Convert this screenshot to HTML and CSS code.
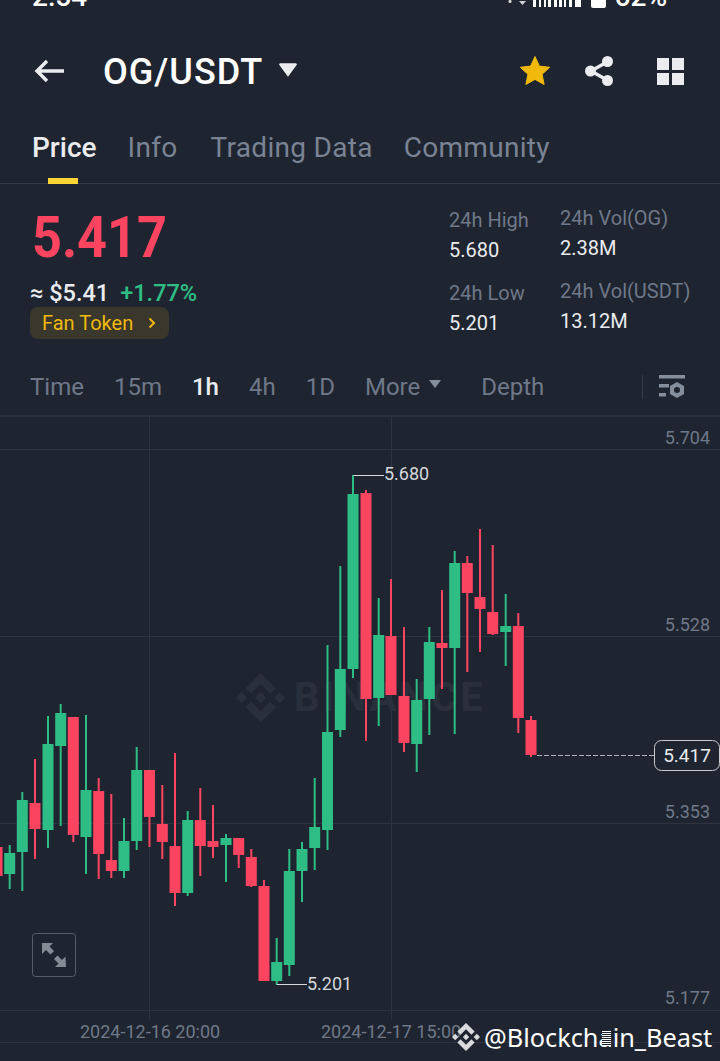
FILE: index.html
```html
<!DOCTYPE html>
<html lang="en">
<head>
  <meta charset="UTF-8" />
  <meta name="viewport" content="width=device-width, initial-scale=1.0" />
  <title>OG/USDT</title>
  <link rel="stylesheet" href="styles.css">
</head>
<body>
  <div class="status-bar">
    <span class="status-time">2:54</span>
    <div class="status-right">
      <svg class="status-icons" width="78" height="8" viewBox="0 0 78 8">
        <circle cx="6" cy="1.500" r="1.600" fill="#cfd2d6"/>
        <path d="M15 1h7l-3.500 4z" fill="#cfd2d6"/>
        <path d="M29 0h3v7h-3zM35 0h2v7h-2zM40 0h2v7h-2zM44 0h3v7h-3zM50 0h3v7h-3zM55 0h3v7h-3zM60 0h2v7h-2zM65 0h3v7h-3zM71 0h6v7h-6z" fill="#fff"/>
      </svg>
      <span class="status-battery"></span>
      <span class="status-pct">62%</span>
    </div>
  </div>

  <header class="top-bar">
    <svg class="back" width="32" height="24" viewBox="0 0 32 24">
      <path d="M30 12H4M13 2L3 12l10 10" fill="none" stroke="#eaecef" stroke-width="3.400"/>
    </svg>
    <h1 class="pair">OG/USDT</h1>
    <svg class="pair-caret" width="20" height="16" viewBox="0 0 18 14"><path d="M2 1h14a1 1 0 0 1 .8 1.600L9 13 1.200 2.600A1 1 0 0 1 2 1z" fill="#eaecef"/></svg>
    <div class="top-actions">
      <svg class="star" width="32" height="32" viewBox="0 0 32 32"><path d="M16 1.500l4.400 9.600 10.300 1.200-7.600 7 2 10.200-9.100-5.100-9.100 5.100 2-10.200-7.600-7 10.300-1.200z" fill="#f0b90b" stroke="#f0b90b" stroke-linejoin="round"/></svg>
      <svg class="share" width="32" height="32" viewBox="0 0 32 32">
        <path d="M24 7L8 16l16 9" fill="none" stroke="#eaecef" stroke-width="3.400"/>
        <circle cx="24.500" cy="6.500" r="5.500" fill="#eaecef"/>
        <circle cx="7.500" cy="16" r="5.500" fill="#eaecef"/>
        <circle cx="24.500" cy="25.500" r="5.500" fill="#eaecef"/>
      </svg>
      <div class="grid-icon"><i></i><i></i><i></i><i></i></div>
    </div>
  </header>

  <nav class="tabs">
    <a class="tab active">Price</a>
    <a class="tab tab-info">Info</a>
    <a class="tab">Trading Data</a>
    <a class="tab">Community</a>
  </nav>

  <section class="summary">
    <div class="summary-left">
      <div class="last-price">5.417</div>
      <div class="sub-price"><span class="usd">≈ $5.41</span><span class="change">+1.77%</span></div>
      <div class="badge">Fan Token
        <svg width="10" height="12" viewBox="0 0 10 12"><path d="M2.500 1.500L7 6l-4.500 4.500" fill="none" stroke="#f0b90b" stroke-width="2"/></svg>
      </div>
    </div>
    <div class="stats">
      <div class="stat-col first">
        <div class="stat"><span class="stat-label">24h High</span><span class="stat-value">5.680</span></div>
        <div class="stat"><span class="stat-label">24h Low</span><span class="stat-value">5.201</span></div>
      </div>
      <div class="stat-col">
        <div class="stat"><span class="stat-label">24h Vol(OG)</span><span class="stat-value">2.38M</span></div>
        <div class="stat"><span class="stat-label">24h Vol(USDT)</span><span class="stat-value">13.12M</span></div>
      </div>
    </div>
  </section>

  <div class="intervals">
    <span class="iv iv-time">Time</span>
    <span class="iv iv-15m">15m</span>
    <span class="iv iv-1h active">1h</span>
    <span class="iv iv-4h">4h</span>
    <span class="iv iv-1d">1D</span>
    <span class="iv iv-more">More
      <svg width="14" height="10" viewBox="0 0 14 10"><path d="M1 1h12L7 9z" fill="#848e9c"/></svg>
    </span>
    <span class="iv iv-depth">Depth</span>
    <span class="iv-sep"></span>
    <svg class="iv-settings" width="26" height="24" viewBox="0 0 26 24">
      <path d="M0 0h26v3.500H0zM0 9h10v3.500H0zM0 18h7v3.500H0z" fill="#848e9c"/>
      <path d="M18 7l7 4v8l-7 4-7-4v-8z" fill="#848e9c"/>
      <circle cx="18" cy="15" r="3" fill="#1f2530"/>
    </svg>
  </div>

  <div class="chart">
    <svg id="chartSvg" width="720" height="644" viewBox="0 417 720 644">
      <g class="grid">
        <path d="M0 449.500H720M0 636.500H720M0 823.500H720M0 1010.500H720M0 1042.500H720M149.500 417V1020M391.500 417V1020"/>
      </g>
      <g class="logo-mark" transform="translate(236 673) scale(0.39)">
        <path d="M38.730 53.200l24.590-24.580 24.600 24.600 14.300-14.310L63.320 0 24.430 38.900l14.300 14.300zM0 63.310l14.300-14.310 14.310 14.310-14.310 14.300zM38.730 73.410l24.590 24.590 24.600-24.600 14.310 14.290-38.900 38.910-38.910-38.880-.02-.02zM98 63.310l14.300-14.310 14.310 14.300-14.310 14.320zM77.830 63.300L63.320 48.780 52.590 59.510l-1.240 1.230-2.540 2.540 14.510 14.500 14.510-14.470z"/>
      </g>
      <text class="logo-text" x="294" y="711">BINANCE</text>
      <g id="candles"></g>
      <text class="axis" x="710" y="444" text-anchor="end">5.704</text>
      <text class="axis" x="710" y="631" text-anchor="end">5.528</text>
      <text class="axis" x="710" y="817.500" text-anchor="end">5.353</text>
      <text class="axis" x="710" y="1004" text-anchor="end">5.177</text>
      <text class="axis" x="80" y="1038">2024-12-16 20:00</text>
      <text class="axis" x="321" y="1038">2024-12-17 15:00</text>
      <path class="marker" d="M353.500 475.500H384M277 984.500H307"/>
      <text class="mark-label" x="384" y="480">5.680</text>
      <text class="mark-label" x="307" y="990">5.201</text>
      <path class="last-line" d="M537 755.500H654"/>
      <rect class="last-box" x="654.500" y="740.500" width="65" height="30" rx="7"/>
      <text class="last-label" x="687" y="762" text-anchor="middle">5.417</text>
      <rect class="expand" x="32.500" y="933.500" width="43" height="43" rx="3"/>
      <path class="expand-arrows" d="M42 943h11l-3.500 3.500 4.500 4.500 -3.500 3.500-4.500-4.500L42 954zM66 967H55l3.500-3.500-4.500-4.500 3.500-3.500 4.500 4.500 3.500-3.500z"/>
    </svg>
  </div>

  <div class="watermark">
    <svg width="28" height="28" viewBox="0 0 126.610 126.610">
      <path d="M38.730 53.200l24.590-24.580 24.600 24.600 14.300-14.310L63.320 0 24.430 38.900l14.300 14.300zM0 63.310l14.300-14.310 14.310 14.310-14.310 14.300zM38.730 73.410l24.590 24.590 24.600-24.600 14.310 14.290-38.900 38.910-38.910-38.880-.02-.02zM98 63.310l14.300-14.310 14.310 14.300-14.310 14.320zM77.830 63.300L63.320 48.780 52.590 59.510l-1.240 1.230-2.540 2.540 14.510 14.500 14.510-14.470z" fill="#d9dbde"/>
    </svg>
    <span class="wm-text">@Blockchain_Beast<i class="wm-glitch"></i></span>
  </div>

  <script>
    // x, wick top, wick bottom, body top, body bottom, up/down
    const candles = [
      [-3, 847, 876, 847, 876, 'd'],
      [9.7, 845, 889, 853, 874, 'u'],
      [22.3, 792, 891, 800, 852, 'u'],
      [35, 759, 859, 803, 829, 'd'],
      [48, 716, 848, 744, 830, 'u'],
      [60.7, 704, 826, 713, 746, 'u'],
      [73.3, 717, 842, 717, 835, 'd'],
      [86, 715, 874, 790, 837, 'u'],
      [98.7, 778, 879, 791, 854, 'd'],
      [111.3, 794, 878, 860, 871, 'd'],
      [124, 818, 878, 841, 871, 'u'],
      [136.7, 747, 850, 770, 841, 'u'],
      [149.5, 770, 847, 770, 817, 'd'],
      [162.3, 785, 859, 824, 842, 'd'],
      [175, 753, 906, 846, 893, 'd'],
      [187.7, 811, 896, 820, 893, 'u'],
      [200.3, 788, 876, 820, 846, 'd'],
      [213, 805, 858, 841, 847, 'd'],
      [226, 834, 882, 838, 845, 'u'],
      [238.7, 838, 868, 838, 855, 'd'],
      [251.3, 849, 887, 857, 886, 'd'],
      [264, 880, 981, 886, 981, 'd'],
      [276.7, 938, 985, 962, 981, 'u'],
      [289.3, 849, 976, 871, 965, 'u'],
      [302, 842, 902, 849, 871, 'u'],
      [314.7, 778, 870, 827, 848, 'u'],
      [327.5, 645, 850, 732, 830, 'u'],
      [340.3, 566, 737, 669, 730, 'u'],
      [353, 475, 678, 494, 669, 'u'],
      [366, 490, 741, 493, 699, 'd'],
      [378.7, 598, 726, 635, 698, 'u'],
      [391, 579, 695, 636, 695, 'd'],
      [404, 627, 752, 696, 743, 'd'],
      [416.7, 679, 772, 700, 744, 'u'],
      [429.3, 627, 735, 642, 699, 'u'],
      [442, 590, 689, 643, 648, 'd'],
      [454.7, 551, 734, 563, 648, 'u'],
      [467.3, 556, 672, 563, 593, 'd'],
      [480, 529, 652, 597, 609, 'd'],
      [492.7, 545, 635, 612, 634, 'd'],
      [505.7, 594, 666, 626, 632, 'u'],
      [518.3, 613, 733, 626, 718, 'd'],
      [531, 716, 757, 720, 755, 'd']
    ];

    const group = document.getElementById('candles');
    const NS = 'http://www.w3.org/2000/svg';

    function addRect(x, y, w, h, cls) {
      const r = document.createElementNS(NS, 'rect');
      r.setAttribute('x', x);
      r.setAttribute('y', y);
      r.setAttribute('width', w);
      r.setAttribute('height', h);
      r.setAttribute('class', cls);
      group.appendChild(r);
    }

    candles.forEach(([x, wt, wb, bt, bb, dir]) => {
      const cls = dir === 'u' ? 'up' : 'down';
      addRect(x - 1, wt, 2, wb - wt, cls);
      addRect(x - 5.5, bt, 11, bb - bt, cls);
    });
  </script>
</body>
</html>
```

FILE: styles.css
```css
* {
  box-sizing: border-box;
}
html, body {
  margin: 0;
  height: 1061px;
  overflow: hidden;
}
body {
  position: relative;
  background-color: #1f2530;
  font-family: Roboto, "Noto Sans", sans-serif;
  color: #eaecef;
}

/* status bar, cut by the top of the screen */
.status-bar {
  height: 8px;
  overflow: hidden;
  display: flex;
  justify-content: space-between;
  align-items: flex-end;
  padding: 0 53px 0 32px;
  color: #fff;
  font-size: 28px;
  font-weight: 500;
  line-height: 22px;
}
.status-right {
  display: flex;
  align-items: flex-end;
  gap: 9px;
}
.status-icons {
  display: block;
}
.status-battery {
  width: 15px;
  height: 10px;
  background-color: #fff;
  border-radius: 2px;
}

/* header */
.top-bar {
  height: 126px;
  display: flex;
  align-items: center;
  padding: 0 36px 0 34px;
}
.back {
  margin-right: 37px;
}
.pair {
  margin: 1px 0 0;
  font-size: 36px;
  font-weight: 500;
  letter-spacing: 1px;
  color: #fff;
}
.pair-caret {
  margin: -3px 0 0 15px;
}
.top-actions {
  margin-left: auto;
  display: flex;
  align-items: center;
}
.star {
  margin-right: 32px;
}
.share {
  margin-right: 42px;
}
.grid-icon {
  width: 27px;
  height: 27px;
  display: grid;
  grid-template-columns: 1fr 1fr;
  gap: 3px;
}
.grid-icon i {
  background-color: #eaecef;
}

/* tabs */
.tabs {
  height: 50px;
  display: flex;
  gap: 31px;
  padding: 0 32px;
  border-bottom: 1px solid #353b46;
}
.tab {
  position: relative;
  font-size: 28px;
  line-height: 28px;
  letter-spacing: 0.3px;
  color: #7a8394;
}
.tab-info {
  width: 52px;
}
.tab.active {
  color: #eaecef;
  font-weight: 500;
  letter-spacing: 0;
}
.tab.active::after {
  content: "";
  position: absolute;
  left: 16px;
  bottom: -1px;
  width: 30px;
  height: 6px;
  background-color: #fcd535;
}

/* price summary */
.summary {
  height: 178px;
  display: flex;
  justify-content: space-between;
  padding: 21px 0 0 30px;
}
.last-price {
  margin: -3px 0 6px 2px;
  font-size: 58px;
  line-height: 70px;
  font-weight: 700;
  color: #fb4560;
  transform: scaleX(0.9);
  transform-origin: left center;
}
.sub-price {
  display: flex;
  gap: 11px;
  font-size: 23.500px;
  line-height: 30px;
  font-weight: 500;
}
.usd {
  color: #eaecef;
}
.change {
  color: #2ebd85;
}
.badge {
  display: inline-flex;
  align-items: center;
  gap: 14px;
  height: 32px;
  margin-top: -1px;
  padding: 0 12px;
  border-radius: 8px;
  background-color: #3a372c;
  color: #f0b90b;
  font-size: 20px;
}
.stats {
  display: flex;
  width: 271px;
}
.stat-col {
  display: flex;
  flex-direction: column;
  gap: 16px;
  width: 111px;
}
.stat-col:last-child {
  width: 160px;
}
.stat-col.first {
  padding-top: 2px;
}
.stat {
  display: flex;
  flex-direction: column;
  gap: 3px;
}
.stat-label {
  font-size: 20px;
  line-height: 26px;
  color: #6f7888;
}
.stat-value {
  font-size: 20px;
  line-height: 28px;
  color: #eaecef;
}

/* interval row */
.intervals {
  height: 55px;
  display: flex;
  align-items: center;
  padding: 0 0 4px 30px;
  border-bottom: 2px solid #2b313c;
  font-size: 24px;
  color: #6f7888;
}
.iv {
  margin-right: 30px;
}
.iv.active {
  color: #eaecef;
  font-weight: 500;
}
.iv-more {
  display: flex;
  align-items: center;
  gap: 8px;
  margin-right: 39px;
}
.iv-more svg {
  margin-top: -6px;
}
.iv-sep {
  width: 1px;
  height: 24px;
  margin-left: 68px;
  background-color: #353b46;
}
.iv-settings {
  margin-left: 16px;
}

/* chart */
.chart {
  height: 644px;
}
.chart svg {
  display: block;
}
.grid path {
  fill: none;
  stroke: #2e343f;
  stroke-width: 1;
}
.logo-mark {
  fill: #2a303b;
}
.logo-text {
  fill: #2a303b;
  font-size: 40px;
  font-weight: 700;
  letter-spacing: 3.200px;
}
.up {
  fill: #2ebd85;
}
.down {
  fill: #fb4560;
}
.axis {
  fill: #6f7888;
  font-size: 18px;
}
.marker {
  fill: none;
  stroke: #d5d8dc;
  stroke-width: 1;
}
.mark-label {
  fill: #d5d8dc;
  font-size: 18px;
}
.last-line {
  fill: none;
  stroke: #b0b4ba;
  stroke-width: 1;
  stroke-dasharray: 5 2;
}
.last-box {
  fill: #1f2530;
  stroke: #c9ccd1;
  stroke-width: 1;
}
.last-label {
  fill: #eaecef;
  font-size: 19px;
}
.expand {
  fill: none;
  stroke: #565c68;
  stroke-width: 1;
}
.expand-arrows {
  fill: #858b95;
}

/* repost watermark */
.watermark {
  position: absolute;
  left: 452px;
  top: 1023px;
  display: flex;
  align-items: center;
  gap: 4px;
  color: #fff;
  font-family: "Noto Sans", sans-serif;
  font-size: 25.300px;
  line-height: 28px;
}
.wm-text {
  position: relative;
}
.wm-glitch {
  position: absolute;
  left: 118px;
  top: 8px;
  width: 9px;
  height: 15px;
  background: repeating-linear-gradient(#fff 0 1px, #1f2530 1px 2px);
}
```
